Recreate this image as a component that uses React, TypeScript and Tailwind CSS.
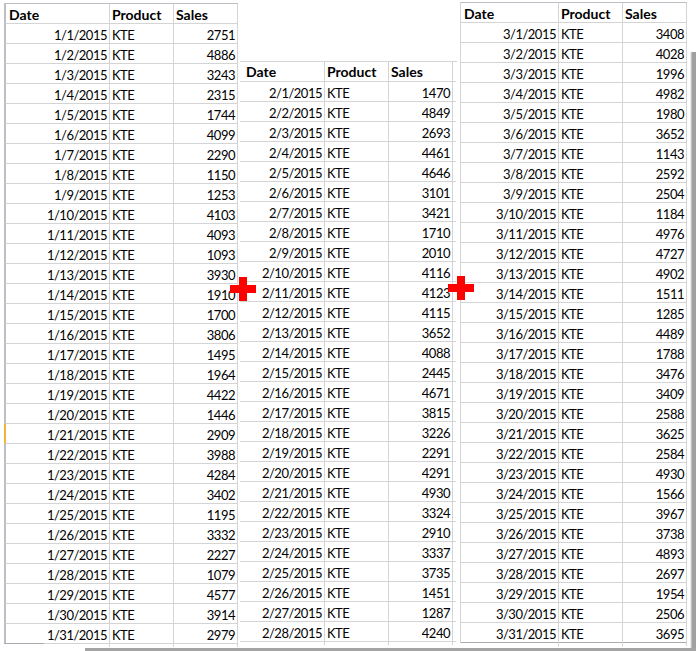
const t1 = [2751,4886,3243,2315,1744,4099,2290,1150,1253,4103,4093,1093,3930,1910,1700,3806,1495,1964,4422,1446,2909,3988,4284,3402,1195,3332,2227,1079,4577,3914,2979];
const t2 = [1470,4849,2693,4461,4646,3101,3421,1710,2010,4116,4123,4115,3652,4088,2445,4671,3815,3226,2291,4291,4930,3324,2910,3337,3735,1451,1287,4240];
const t3 = [3408,4028,1996,4982,1980,3652,1143,2592,2504,1184,4976,4727,4902,1511,1285,4489,1788,3476,3409,2588,3625,2584,4930,1566,3967,3738,4893,2697,1954,2506,3695];

function Row({ cols, a, b, c, bold, edge }: { cols: string; a: string; b: string; c: string; bold?: boolean; edge?: string }) {
  return (
    <div className={`h-[20px] border-b border-[#d4d4d4] ${edge ?? ""} ${bold ? "font-bold text-[14px] leading-[21px]" : "text-[13px] leading-[23px] tracking-[-0.5px]"}`}>
      <div className={`grid h-full ${cols}`}>
        <div className={`border-r border-[#d4d4d4] pr-[2px] ${bold ? "pl-[3px] text-left" : "text-right"}`}>{a}</div>
        <div className="border-r border-[#d4d4d4] pl-[2px]">{b}</div>
        <div className={`border-r border-[#d4d4d4] pr-[2px] ${bold ? "pl-[2px] text-left" : "text-right"}`}>{c}</div>
      </div>
    </div>
  );
}

function Sheet({ month, data, cols, className, edge }: { month: number; data: number[]; cols: string; className: string; edge?: (i: number) => string }) {
  return (
    <div className={className}>
      <Row cols={cols} a="Date" b="Product" c="Sales" bold edge={edge?.(-1)} />
      {data.map((v, i) => (
        <Row key={i} cols={cols} a={`${month}/${i + 1}/2015`} b="KTE" c={String(v)} edge={edge?.(i)} />
      ))}
    </div>
  );
}

function Plus({ className }: { className: string }) {
  return (
    <svg className={className} viewBox="0 0 26 24" width="26" height="24">
      <path d="M9 0h8v8h9v8h-9v8H9v-8H0V8h9z" fill="#ff0000" />
    </svg>
  );
}

export default function App() {
  return (
    <div className="relative flex flex-col w-[696px] h-[651px] overflow-hidden bg-white text-black font-['Lato','Liberation_Sans',sans-serif]">
      <div className="flex h-[648px]">
        <div className="flex items-start w-[690px]">
          <div className="ml-[4px] mt-[3px] w-[234px]">
            <Sheet
              month={1}
              data={t1}
              cols="grid-cols-[104px_64px_64px]"
              className="border-t border-[#bcc0c6]"
              edge={(i) => (i === 20 ? "border-l-2 border-l-[#f0b43c]" : "border-l-2 border-l-[#bcc0c6]")}
            />
            <div className="-mt-px h-px w-[40px] bg-[#a8acb2]" />
          </div>
          <Sheet month={2} data={t2} cols="grid-cols-[82px_64px_64px]" className="ml-[2px] mt-[61px] pl-[3px] pr-[4px] w-[217px] border-t border-[#d4d4d4] [&>div]:-mx-[3px] [&>div]:px-[3px] [&>div:first-child]:leading-[19px]" />
          <Sheet month={3} data={t3} cols="grid-cols-[98px_64px_64px]" className="ml-[3px] mt-[2px] w-[227px] border-t border-[#bcc0c6] border-l border-l-[#d4d4d4] [&>div:last-child]:border-b-[#a8acb2]" />
        </div>
        <div className="w-[6px] pt-[52px]">
          <div className="h-full bg-gradient-to-r from-white to-[#a0a0a0] to-40%" />
        </div>
      </div>
      <div className="ml-[85px] h-[3px] bg-[#a4a4a4]" />
      <Plus className="absolute left-[230px] top-[277px]" />
      <Plus className="absolute left-[448px] top-[276px]" />
    </div>
  );
}
